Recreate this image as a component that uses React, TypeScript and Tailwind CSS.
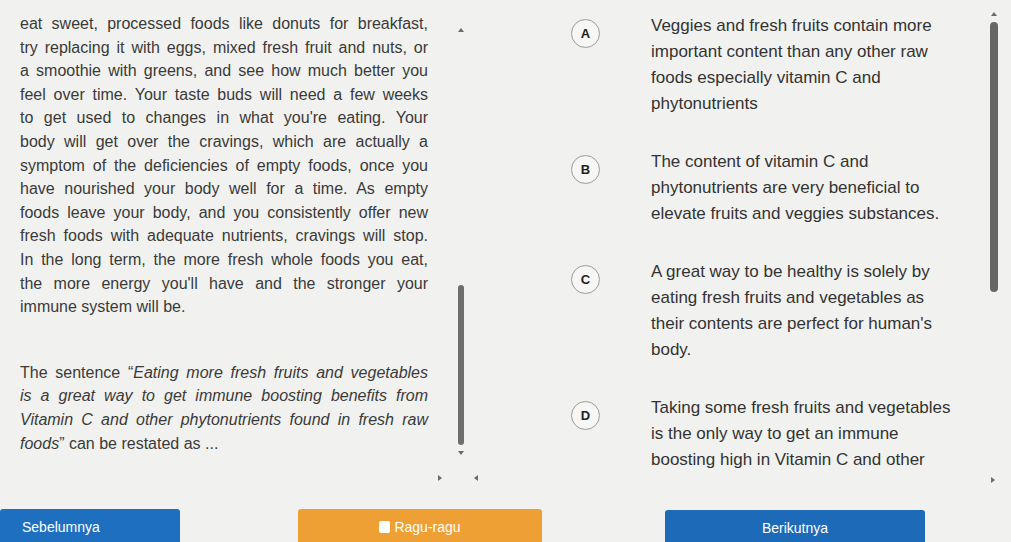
import type { ReactNode } from "react";

const passage = [
  "eat sweet, processed foods like donuts for breakfast,",
  "try replacing it with eggs, mixed fresh fruit and nuts, or",
  "a smoothie with greens, and see how much better you",
  "feel over time. Your taste buds will need a few weeks",
  "to get used to changes in what you're eating. Your",
  "body will get over the cravings, which are actually a",
  "symptom of the deficiencies of empty foods, once you",
  "have nourished your body well for a time. As empty",
  "foods leave your body, and you consistently offer new",
  "fresh foods with adequate nutrients, cravings will stop.",
  "In the long term, the more fresh whole foods you eat,",
  "the more energy you'll have and the stronger your",
];

const options = [
  {
    key: "A",
    lines: ["Veggies and fresh fruits contain more", "important content than any other raw", "foods especially vitamin C and", "phytonutrients"],
  },
  {
    key: "B",
    lines: ["The content of vitamin C and", "phytonutrients are very beneficial to", "elevate fruits and veggies substances."],
  },
  {
    key: "C",
    lines: ["A great way to be healthy is solely by", "eating fresh fruits and vegetables as", "their contents are perfect for human's", "body."],
  },
  {
    key: "D",
    lines: ["Taking some fresh fruits and vegetables", "is the only way to get an immune", "boosting high in Vitamin C and other"],
  },
];

function Line({ children, last }: { children: ReactNode; last?: boolean }) {
  return (
    <div className={last ? "whitespace-nowrap" : "whitespace-nowrap text-justify [text-align-last:justify]"}>{children}</div>
  );
}

function UpArrow() {
  return <div className="h-0 w-0 border-x-[3px] border-b-[4px] border-x-transparent border-b-[#6b6b6b]" />;
}

function DownArrow() {
  return <div className="h-0 w-0 border-x-[3px] border-t-[4px] border-x-transparent border-t-[#6b6b6b]" />;
}

export default function App() {
  return (
    <div
      className="relative h-[542px] w-[1011px] overflow-hidden bg-[#f1f2ef] text-[#3a3a3a]"
      style={{ fontFamily: '"Liberation Sans", Arial, sans-serif' }}
    >
      <div className="flex h-[492px]">
        {/* reading passage */}
        <div className="relative h-full w-[478px] shrink-0 overflow-hidden">
          <div className="w-[428px] pl-[20px] pt-[12px] text-[16px] leading-[23.6px]">
            {passage.map((l) => (
              <Line key={l}>{l}</Line>
            ))}
            <Line last>immune system will be.</Line>
            <div className="mt-[42px]">
              <Line>
                The sentence “<i>Eating more fresh fruits and vegetables</i>
              </Line>
              <Line>
                <i>is a great way to get immune boosting benefits from</i>
              </Line>
              <Line>
                <i>Vitamin C and other phytonutrients found in fresh raw</i>
              </Line>
              <Line last>
                <i>foods</i>” can be restated as ...
              </Line>
            </div>
          </div>
          {/* vertical scrollbar */}
          <div className="absolute left-[457px] top-[28px] flex h-[432px] w-[8px] flex-col items-center">
            <UpArrow />
            <div className="mt-[253px] h-[160px] w-[6px] rounded-full bg-[#6e6e6e]" />
            <div className="mt-[6px]">
              <DownArrow />
            </div>
          </div>
          <div className="absolute left-[438px] top-[475px] h-0 w-0 border-y-[3px] border-l-[4px] border-y-transparent border-l-[#6b6b6b]" />
          <div className="absolute left-[474px] top-[475px] h-0 w-0 border-y-[3px] border-r-[4px] border-y-transparent border-r-[#6b6b6b]" />
        </div>

        {/* options */}
        <div className="relative h-full flex-1">
          <div className="flex h-[477px] flex-col gap-[32px] overflow-hidden pt-[13px]">
            {options.map((o) => (
              <div key={o.key} className="flex shrink-0 items-start">
                <div className="ml-[93px] mt-[6px] flex h-[29px] w-[29px] shrink-0 items-center justify-center rounded-full border border-[#9a9a9a] bg-[#f6f6f4] text-[13px] font-bold text-[#222]">
                  {o.key}
                </div>
                <div className="ml-[51px] text-[17px] leading-[26px] text-[#333]">
                  {o.lines.map((l) => (
                    <div key={l} className="whitespace-nowrap">
                      {l}
                    </div>
                  ))}
                </div>
              </div>
            ))}
          </div>
          <div className="absolute left-[512px] top-[12px] flex flex-col items-center">
            <UpArrow />
            <div className="mt-[6px] h-[270px] w-[8px] rounded-full bg-[#666]" />
          </div>
          <div className="absolute left-[513px] top-[477px] h-0 w-0 border-y-[3px] border-l-[4px] border-y-transparent border-l-[#6b6b6b]" />
        </div>
      </div>

      {/* navigation */}
      <div className="mt-[17px] flex items-start">
        <button className="h-[36px] w-[180px] rounded-[3px] bg-[#1f6fc1] pl-[22px] text-left text-[14px] font-medium text-white">
          Sebelumnya
        </button>
        <button className="ml-[118px] flex h-[36px] w-[244px] items-center justify-center gap-[4px] rounded-[3px] bg-[#eea034] text-[14px] font-medium text-white">
          <span className="inline-block h-[12px] w-[11px] rounded-[2px] bg-white" />
          Ragu-ragu
        </button>
        <button className="ml-[123px] mt-[1px] h-[36px] w-[260px] rounded-[3px] bg-[#1d6ab8] text-[14px] font-medium text-white">
          Berikutnya
        </button>
      </div>
    </div>
  );
}
